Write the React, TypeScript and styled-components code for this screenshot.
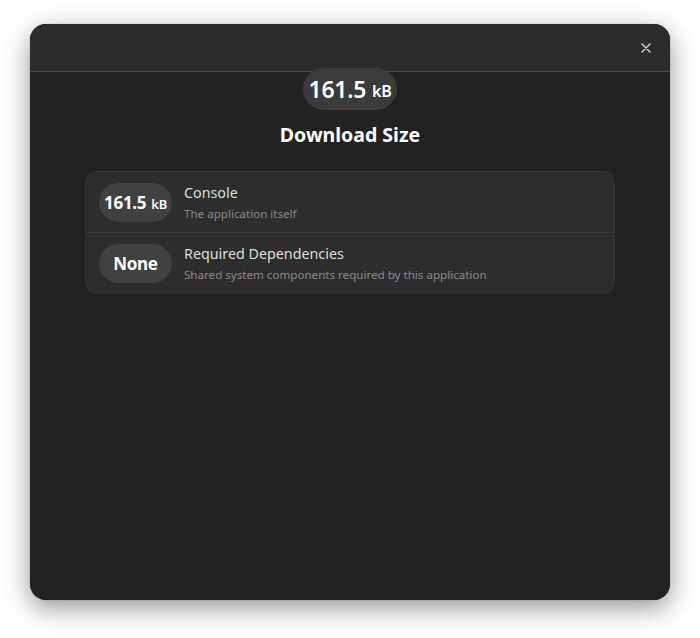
import styled, { createGlobalStyle } from "styled-components";

const Global = createGlobalStyle`
  html, body {
    margin: 0;
    background: #ffffff;
  }
  body {
    font-family: "Noto Sans", "Open Sans", sans-serif;
  }
`;

type Item = { size: string; unit?: string; title: string; subtitle: string };

const items: Item[] = [
  { size: "161.5", unit: "kB", title: "Console", subtitle: "The application itself" },
  {
    size: "None",
    title: "Required Dependencies",
    subtitle: "Shared system components required by this application",
  },
];

export default function App() {
  return (
    <Page>
      <Global />
      <Dialog>
        <Header>
          <CloseButton aria-label="Close">
            <svg width="10" height="10" viewBox="0 0 10 10">
              <path d="M1 1 L9 9 M9 1 L1 9" stroke="#d6d6d6" strokeWidth="1.4" strokeLinecap="round" />
            </svg>
          </CloseButton>
        </Header>
        <Content>
          <BigPill>
            161.5<Unit $big>kB</Unit>
          </BigPill>
          <Title>Download Size</Title>
          <List>
            {items.map((it) => (
              <Row key={it.title}>
                <SizePill>
                  {it.size}
                  {it.unit && <Unit>{it.unit}</Unit>}
                </SizePill>
                <Texts>
                  <RowTitle>{it.title}</RowTitle>
                  <RowSubtitle>{it.subtitle}</RowSubtitle>
                </Texts>
              </Row>
            ))}
          </List>
        </Content>
      </Dialog>
    </Page>
  );
}

const Page = styled.div`
  padding: 24px 30px 38px;
`;

const Dialog = styled.div`
  width: 640px;
  height: 576px;
  background: #222222;
  border-radius: 16px;
  overflow: hidden;
  box-shadow: 0 8px 26px rgba(0, 0, 0, 0.42), 0 0 1px rgba(0, 0, 0, 0.5);
  display: flex;
  flex-direction: column;
`;

const Header = styled.div`
  height: 47px;
  background: #2c2c2c;
  border-bottom: 1px solid #4a4a4a;
  display: flex;
  align-items: center;
  justify-content: flex-end;
  padding-right: 18px;
  flex-shrink: 0;
`;

const CloseButton = styled.button`
  border: none;
  background: transparent;
  padding: 0;
  width: 12px;
  height: 12px;
  display: flex;
  align-items: center;
  justify-content: center;
  margin-top: 1px;
  cursor: pointer;
`;

const Content = styled.div`
  display: flex;
  flex-direction: column;
  align-items: center;
`;

const BigPill = styled.div`
  margin-top: -4px;
  height: 42px;
  padding: 0 6px;
  min-width: 94px;
  box-sizing: border-box;
  border-radius: 21px;
  background: #3b3b3b;
  color: #ffffff;
  font-size: 23px;
  font-weight: 600;
  display: flex;
  align-items: center;
  justify-content: center;
  letter-spacing: -0.3px;
`;

const Unit = styled.span<{ $big?: boolean }>`
  font-size: ${(p) => (p.$big ? "16px" : "13px")};
  font-weight: 600;
  margin-left: ${(p) => (p.$big ? "6px" : "5px")};
  margin-top: 3px;
`;

const Title = styled.h2`
  margin: 12px 0 0;
  color: #ffffff;
  font-size: 19.5px;
  font-weight: 700;
  line-height: 26px;
`;

const List = styled.div`
  margin-top: 23px;
  width: 530px;
  box-sizing: border-box;
  background: #2d2d2d;
  border: 1px solid #363636;
  border-radius: 12px;
  overflow: hidden;
`;

const Row = styled.div`
  height: 60px;
  display: flex;
  align-items: center;
  padding: 0 13px;
  gap: 12px;
  & + & {
    border-top: 1px solid #3c3c3c;
  }
`;

const SizePill = styled.div`
  width: 73px;
  height: 39px;
  border-radius: 20px;
  background: #414141;
  color: #ffffff;
  font-size: 17px;
  font-weight: 700;
  display: flex;
  align-items: center;
  justify-content: center;
  flex-shrink: 0;
  letter-spacing: -0.3px;
`;

const Texts = styled.div`
  display: flex;
  flex-direction: column;
  gap: 2px;
`;

const RowTitle = styled.div`
  color: #dedede;
  font-size: 14.3px;
  line-height: 20px;
`;

const RowSubtitle = styled.div`
  color: #8a8a8a;
  font-size: 11.6px;
  line-height: 17px;
`;
